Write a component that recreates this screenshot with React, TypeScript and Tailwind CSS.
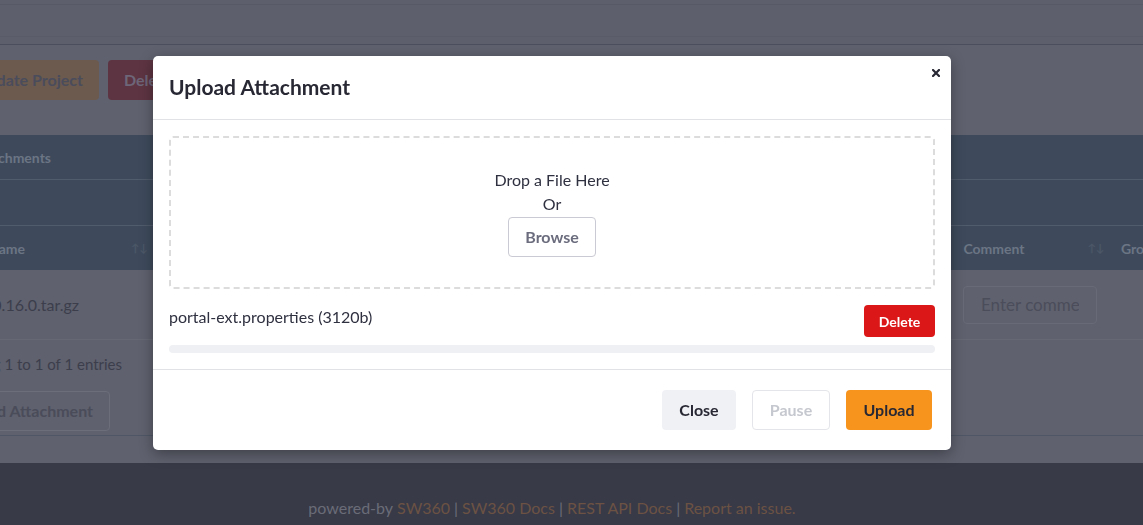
export default function App() {
  return (
    <div className="relative flex h-[525px] w-full flex-col overflow-hidden bg-[#5f616e] font-['Lato','Noto_Sans',sans-serif]">
      {/* top nav (dimmed) */}
      <div className="flex h-[45px] flex-col border-b border-[#4b4e5c] bg-[#5d5f6c]">
        <div className="mt-[4px] h-px bg-[#575966]" />
        <div className="mt-[31px] h-px bg-[#595b68]" />
      </div>

      {/* action buttons */}
      <div className="flex h-[90px] items-start gap-[9px] pt-[15px]">
        <div className="flex w-[99px] shrink-0 justify-end">
          <div className="flex h-[40px] shrink-0 items-center whitespace-nowrap rounded-[4px] bg-[#6c5a4e] px-4 text-[16px] font-bold text-[#4a4c5c]">
            Update Project
          </div>
        </div>
        <div className="flex h-[40px] shrink-0 items-center rounded-[4px] bg-[#5d3442] px-4 text-[16px] font-bold text-[#6d6578]">
          Delete Project
        </div>
      </div>

      {/* table */}
      <div className="flex flex-col">
        <div className="flex h-[45px] items-center border-b border-[#505b6b] bg-[#3e4a5c]">
          <div className="flex w-[51px] shrink-0 justify-end">
            <span className="shrink-0 whitespace-nowrap text-[14px] font-bold text-[#6b7584]">Attachments</span>
          </div>
        </div>
        <div className="h-[46px] border-b border-[#505b6b] bg-[#3e4a5c]" />
        <div className="flex h-[44px] items-center bg-[#3e4a5c] text-[14px] font-bold text-[#6b7584]">
          <div className="flex w-[25px] shrink-0 justify-end">
            <span className="shrink-0 whitespace-nowrap">Name</span>
          </div>
          <span className="ml-[106px] text-[11px] text-[#4c5767]">↑↓</span>
          <span className="ml-auto">Comment</span>
          <span className="ml-[63px] text-[11px] text-[#4c5767]">↑↓</span>
          <span className="ml-[17px] w-[22px] overflow-hidden whitespace-nowrap">Group</span>
        </div>
        <div className="flex h-[70px] items-center border-b border-[#666874] text-[16px] text-[#3c3e4c]">
          <div className="flex w-[79px] shrink-0 justify-end">
            <span className="shrink-0 whitespace-nowrap">sw360-0.16.0.tar.gz</span>
          </div>
          <div className="ml-auto mr-[46px] flex h-[38px] w-[134px] items-center rounded-[4px] border border-[#686a77] px-[17px] text-[17px] text-[#4b4d5b]">
            <span className="block w-full overflow-hidden whitespace-nowrap">Enter comment</span>
          </div>
        </div>
        <div className="flex h-[46px] items-center pt-[2px] text-[15px] text-[#3c3e4c]">
          <div className="flex w-[122px] shrink-0 justify-end">
            <span className="shrink-0 whitespace-nowrap">Showing 1 to 1 of 1 entries</span>
          </div>
        </div>
        <div className="flex h-[50px] items-start border-b border-[#4f5766] pt-[5px]">
          <div className="flex w-[110px] shrink-0 justify-end">
            <div className="flex h-[40px] shrink-0 items-center whitespace-nowrap rounded-[4px] border border-[#6c6e7a] px-4 text-[16px] font-bold text-[#4a4c5a]">
              Add Attachment
            </div>
          </div>
        </div>
        <div className="h-[27px]" />
      </div>

      {/* footer */}
      <div className="flex flex-1 items-center justify-center bg-[#383a48] pr-[39px] pt-[27px] text-[16px] text-[#6a6c77]">
        <span>powered-by </span>
        <span className="ml-1 text-[#6c5243]">SW360</span>
        <span className="mx-1">|</span>
        <span className="text-[#6c5243]">SW360 Docs</span>
        <span className="mx-1">|</span>
        <span className="text-[#6c5243]">REST API Docs</span>
        <span className="mx-1">|</span>
        <span className="text-[#6c5243]">Report an issue.</span>
      </div>

      {/* modal */}
      <div
        role="dialog"
        aria-modal="true"
        className="fixed left-[153px] top-[56px] w-[798px] rounded-[5px] bg-white shadow-[0_4px_14px_rgba(0,0,0,0.35)]"
      >
        <div className="flex h-[64px] items-start justify-between border-b border-[#e1e2e6] pl-4 pr-[11px] pt-4">
          <h2 className="text-[21px] font-bold leading-[30px] text-[#272833]">Upload Attachment</h2>
          <button type="button" className="-mt-[3px] flex h-[8px] w-[8px] items-center justify-center" aria-label="Close">
            <svg viewBox="0 0 8 8" className="h-[8px] w-[8px]" aria-hidden>
              <path d="M1 1L7 7M7 1L1 7" stroke="#272833" strokeWidth={2.2} strokeLinecap="square" />
            </svg>
          </button>
        </div>

        <div className="px-4 pb-4 pt-[16px]">
          <div className="flex h-[153px] flex-col items-center justify-center rounded-[4px] border-2 border-dashed border-[#dcdcdc] text-[16px] text-[#2f3040]">
            <span className="leading-6">Drop a File Here</span>
            <span className="leading-6">Or</span>
            <button
              type="button"
              className="mt-[1px] h-[40px] w-[88px] rounded-[4px] border border-[#c9cad3] text-[16px] font-bold text-[#6b6c7d]"
            >
              Browse
            </button>
          </div>

          <div className="mt-[16px] flex items-start justify-between">
            <span className="text-[16px] leading-6 text-[#2f3040]">portal-ext.properties (3120b)</span>
            <button
              type="button"
              className="h-[32px] w-[71px] rounded-[4px] bg-[#dc1717] text-[14px] font-bold text-white"
            >
              Delete
            </button>
          </div>

          <div className="mt-[8px] h-[8px] rounded-full bg-[#eff0f3]" />
        </div>

        <div className="flex h-[81px] items-center justify-end gap-4 border-t border-[#e1e2e6] pr-[19px]">
          <button type="button" className="h-[40px] w-[74px] rounded-[4px] bg-[#f0f1f4] text-[16px] font-bold text-[#272833]">
            Close
          </button>
          <button
            type="button"
            className="h-[40px] w-[78px] rounded-[4px] border border-[#e4e5ea] bg-white text-[16px] font-bold text-[#c6c8cf]"
          >
            Pause
          </button>
          <button type="button" className="h-[40px] w-[86px] rounded-[4px] bg-[#f7941e] text-[16px] font-bold text-[#272833]">
            Upload
          </button>
        </div>
      </div>
    </div>
  );
}
